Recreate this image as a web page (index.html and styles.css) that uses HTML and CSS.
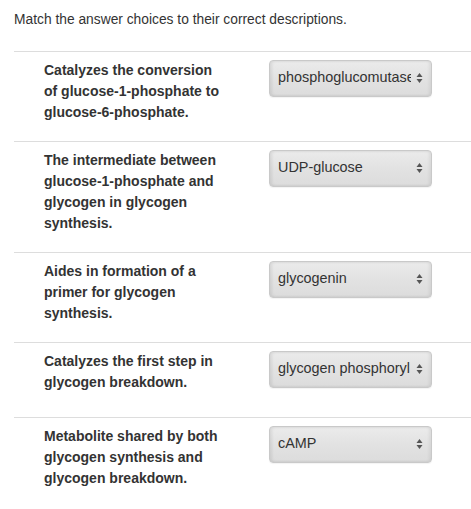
FILE: index.html
```html
<!DOCTYPE html>
<html>
<head>
<meta charset="utf-8">
<link rel="stylesheet" href="styles.css">
</head>
<body>
<div class="page">
  <p class="prompt">Match the answer choices to their correct descriptions.</p>
  <div class="rows">
    <div class="row">
      <div class="desc">Catalyzes the conversion of glucose-1-phosphate to glucose-6-phosphate.</div>
      <div class="select"><span class="val">phosphoglucomutase</span><svg class="arr" width="7" height="12" viewBox="0 0 7 12"><path d="M3.5 1 L6.5 5 L0.5 5 Z M0.5 7 L6.5 7 L3.5 11 Z" fill="#555"/></svg></div>
    </div>
    <div class="row">
      <div class="desc">The intermediate between glucose-1-phosphate and glycogen in glycogen synthesis.</div>
      <div class="select"><span class="val">UDP-glucose</span><svg class="arr" width="7" height="12" viewBox="0 0 7 12"><path d="M3.5 1 L6.5 5 L0.5 5 Z M0.5 7 L6.5 7 L3.5 11 Z" fill="#555"/></svg></div>
    </div>
    <div class="row">
      <div class="desc">Aides in formation of a primer for glycogen synthesis.</div>
      <div class="select"><span class="val">glycogenin</span><svg class="arr" width="7" height="12" viewBox="0 0 7 12"><path d="M3.5 1 L6.5 5 L0.5 5 Z M0.5 7 L6.5 7 L3.5 11 Z" fill="#555"/></svg></div>
    </div>
    <div class="row">
      <div class="desc">Catalyzes the first step in glycogen breakdown.</div>
      <div class="select"><span class="val">glycogen phosphoryl</span><svg class="arr" width="7" height="12" viewBox="0 0 7 12"><path d="M3.5 1 L6.5 5 L0.5 5 Z M0.5 7 L6.5 7 L3.5 11 Z" fill="#555"/></svg></div>
    </div>
    <div class="row">
      <div class="desc">Metabolite shared by both glycogen synthesis and glycogen breakdown.</div>
      <div class="select"><span class="val">cAMP</span><svg class="arr" width="7" height="12" viewBox="0 0 7 12"><path d="M3.5 1 L6.5 5 L0.5 5 Z M0.5 7 L6.5 7 L3.5 11 Z" fill="#555"/></svg></div>
    </div>
  </div>
</div>
</body>
</html>
```
FILE: styles.css
```css
html, body {
  margin: 0;
  padding: 0;
  background: #fff;
}
body {
  font-family: "Liberation Sans", Arial, Helvetica, sans-serif;
  color: #333;
}
.page {
  padding: 11px 0 0 14px;
}
.prompt {
  margin: 0 0 22px 0;
  font-size: 13.8px;
  line-height: 18px;
}
.row {
  border-top: 1px solid #dddddd;
  display: grid;
  grid-template-columns: 180px 163px;
  column-gap: 45px;
  align-items: start;
  padding: 8px 0 18px 30px;
}
.desc {
  font-weight: bold;
  font-size: 14px;
  line-height: 21px;
}
.select {
  box-sizing: border-box;
  height: 37px;
  margin-bottom: 11px;
  border: 1px solid #c9c9c9;
  border-radius: 4px;
  background: linear-gradient(#ebebeb, #e2e2e2 50%, #dcdcdc);
  box-shadow: inset 2px 0 3px rgba(0,0,0,0.08), inset -2px 0 3px rgba(0,0,0,0.06), 0 1px 1px rgba(0,0,0,0.05);
  display: flex;
  align-items: center;
  padding: 0 8px 3px 8px;
  font-size: 14.4px;
  color: #333;
}
.val {
  flex: 1;
  overflow: hidden;
  white-space: nowrap;
}
.arr {
  flex: none;
  margin-left: 5px;
  margin-top: 2px;
}
```
